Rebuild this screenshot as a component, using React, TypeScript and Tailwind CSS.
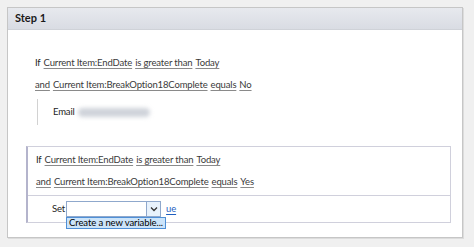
import React from 'react';

const font = { fontFamily: 'Lato, "Noto Sans", sans-serif' };

const Link: React.FC<{ children: React.ReactNode }> = ({ children }) => (
  <span className="underline decoration-[#8a8a8a] underline-offset-2 text-[#3a3a3a]">{children}</span>
);

const Condition: React.FC<{ value: string }> = ({ value }) => (
  <>
    <div className="h-[22px] flex items-center gap-[3px]">
      <span>If</span>
      <Link>Current Item:EndDate</Link>
      <Link>is greater than</Link>
      <Link>Today</Link>
    </div>
    <div className="h-[22px] flex items-center gap-[3px]">
      <Link>and</Link>
      <Link>Current Item:BreakOption18Complete</Link>
      <Link>equals</Link>
      <Link>{value}</Link>
    </div>
  </>
);

const App: React.FC = () => {
  return (
    <div className="w-[474px] h-[247px] bg-[#f0f0f0] pt-[7px] pl-[7px] text-[9.5px] tracking-[-0.15px] text-[#222]" style={font}>
      <div className="w-[456px] h-[231px] bg-white border border-[#c6c6c6] shadow-[1px_1px_0_#dcdcdc] flex flex-col">
        <div className="h-[22px] flex items-center px-[7px] bg-gradient-to-b from-[#e7e9ee] to-[#d9dce3] border-b border-[#cfd2d8]">
          <span className="font-bold text-[11px] tracking-normal text-[#1a1a1a]">Step 1</span>
        </div>

        <div className="pl-[27px] pt-[22px]">
          <Condition value="No" />
          <div className="ml-[2px] mt-[3px] h-[26px] border-l border-[#d2d2d2] flex items-center pl-[15px] gap-[3px]">
            <span>Email</span>
            <span className="w-[72px] h-[9px] rounded-full bg-[#cfd3da] blur-[2px]" />
          </div>
        </div>

        <div className="ml-[18px] mr-[11px] mt-[21px] border border-[#d0d0dc] border-l-2 border-l-[#b4b4cc] flex flex-col">
          <div className="pl-[8px] pt-[2px]">
            <Condition value="Yes" />
          </div>
          <div className="border-t border-[#d0d0dc] mt-[2px] h-[27px] flex items-center pl-[24px]">
            <span className="mr-[1px]">Set</span>
            <div className="relative">
              <div className="w-[95px] h-[16px] border border-[#8fa8cc] bg-white flex justify-end">
                <div className="w-[14px] h-full border-l border-[#8fa8cc] bg-[#e8f2fc] flex items-center justify-center">
                  <svg width="8" height="6" viewBox="0 0 8 6">
                    <path d="M1 1.5 L4 4.5 L7 1.5" fill="none" stroke="#333" strokeWidth="1.3" />
                  </svg>
                </div>
              </div>
              <div className="absolute left-0 top-[16px] h-[12px] px-[2px] flex items-center bg-[#cce4fa] border border-[#4f8fd6] text-[9.5px] tracking-[-0.1px] text-black whitespace-nowrap">
                Create a new variable...
              </div>
            </div>
            <span className="ml-[5px] text-[#1f5fbf] underline underline-offset-2">ue</span>
          </div>
        </div>
      </div>
    </div>
  );
};

export default App;
